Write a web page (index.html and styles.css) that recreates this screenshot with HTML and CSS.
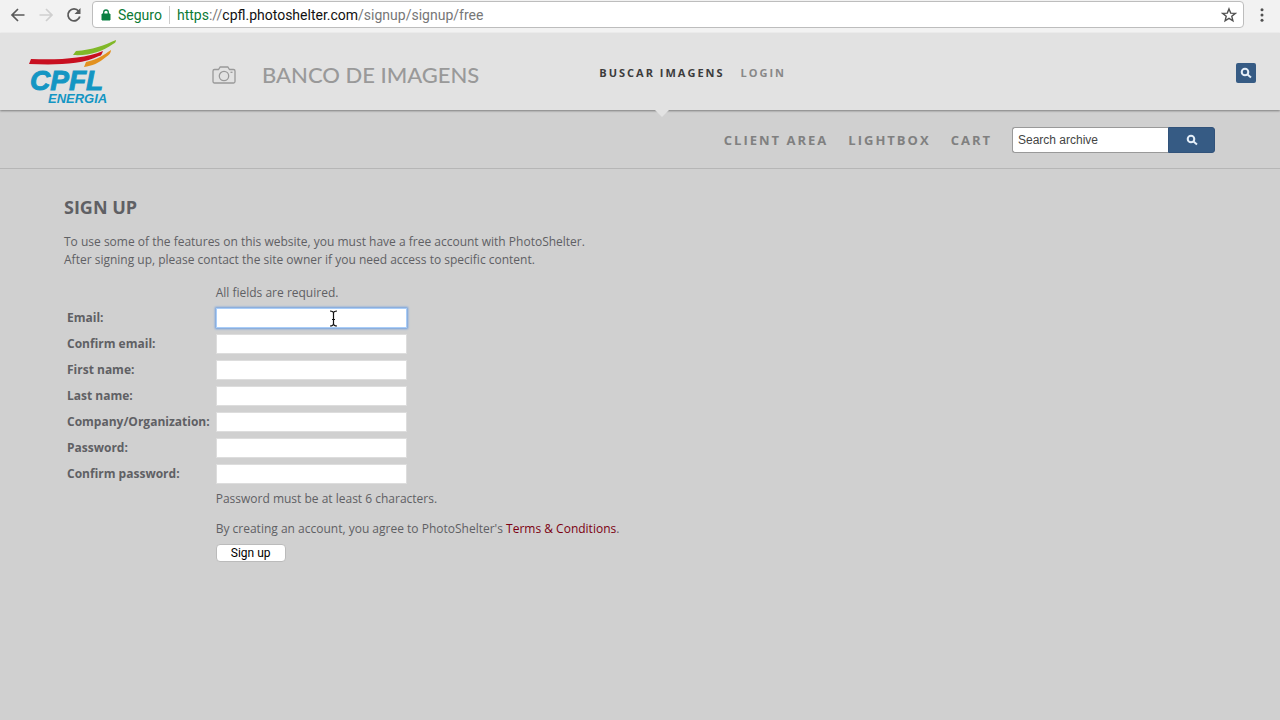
FILE: index.html
```html
<!DOCTYPE html>
<html lang="pt-BR">
<head>
    <meta charset="UTF-8">
    <meta name="viewport" content="width=device-width, initial-scale=1.0">
    <title>Sign Up - CPFL Energia</title>
    <link rel="stylesheet" href="styles.css">
</head>
<body>
    <div class="browser">
        <button class="browser-btn" type="button" aria-label="Back">
            <svg width="16" height="16" viewBox="0 0 16 16" fill="none" stroke="#5a5a5a" stroke-width="1.7"><path d="M14.5 8H2.5M8 2L2 8l6 6"/></svg>
        </button>
        <button class="browser-btn" type="button" aria-label="Forward">
            <svg width="16" height="16" viewBox="0 0 16 16" fill="none" stroke="#cfcfcf" stroke-width="1.7"><path d="M1.500 8H13.500M8 2l6 6-6 6"/></svg>
        </button>
        <button class="browser-btn" type="button" aria-label="Reload">
            <svg width="16" height="16" viewBox="0 0 16 16" fill="none" stroke="#5a5a5a" stroke-width="1.8"><path d="M12.700 4.200A6 6 0 1 0 13.800 9.500"/><path d="M14.500 1v6h-6z" fill="#5a5a5a" stroke="none"/></svg>
        </button>
        <div class="address">
            <svg class="lock" width="10" height="12" viewBox="0 0 10 12"><path d="M1 5h8v6H1z" fill="#0b8043" stroke="#0b8043" stroke-linejoin="round"/><path d="M2.700 5V3.300a2.300 2.300 0 0 1 4.600 0V5" fill="none" stroke="#0b8043" stroke-width="1.300"/></svg>
            <span class="secure">Seguro</span>
            <span class="url"><span class="scheme">https</span>://<span class="host">cpfl.photoshelter.com</span>/signup/signup/free</span>
            <button class="star" type="button" aria-label="Bookmark">
                <svg width="16" height="16" viewBox="0 0 16 16" fill="none" stroke="#505050" stroke-width="1.400"><path d="M8 1.900l1.700 4.200 4.600.3-3.500 2.900 1.100 4.500L8 11.400l-3.900 2.400 1.100-4.500L1.700 6.400l4.600-.3z"/></svg>
            </button>
        </div>
        <button class="browser-btn" type="button" aria-label="Menu">
            <svg width="16" height="16" viewBox="0 0 16 16" fill="#505050"><circle cx="8" cy="2.800" r="1.500"/><circle cx="8" cy="8" r="1.500"/><circle cx="8" cy="13.200" r="1.500"/></svg>
        </button>
    </div>

    <header class="header">
        <a class="logo" href="#" aria-label="CPFL Energia">
            <svg width="92" height="68" viewBox="0 0 92 68">
                <path d="M48 13C64 12 77 7 88 2C88 4 87 5 85 6C74 14 60 18 45 17z" fill="#80b828"/>
                <path d="M3 21C29 22 56 21 75 13C74 16 73 18 71 18C53 27 26 27 1 26z" fill="#c80f20"/>
                <path d="M58 24C68 22 76 17 83 12C83 15 81 17 78 19C71 25 64 28 56 29z" fill="#e2911f"/>
                <text class="logo-name" x="2" y="52">CPFL</text>
                <text class="logo-sub" x="20" y="65">ENERGIA</text>
            </svg>
        </a>
        <a class="brand" href="#">
            <svg width="24" height="18" viewBox="0 0 24 18" fill="none" stroke="#999" stroke-width="1.300"><path d="M2.500 3.500H6.500L8.200 1h7.600l1.700 2.500h4A1.500 1.500 0 0 1 23 5v10.500A1.500 1.500 0 0 1 21.500 17h-19A1.500 1.500 0 0 1 1 15.500V5A1.500 1.500 0 0 1 2.500 3.500z"/><circle cx="12" cy="10" r="4.700"/><path d="M18.500 6.300h2"/></svg>
            <span>BANCO DE IMAGENS</span>
        </a>
        <nav class="main-nav">
            <a class="active" href="#">BUSCAR IMAGENS</a>
            <a href="#">LOGIN</a>
        </nav>
        <button class="header-search" type="button" aria-label="Search">
            <svg width="12" height="12" viewBox="0 0 12 12" fill="none" stroke="#e4eef8" stroke-width="2"><circle cx="5" cy="5" r="3.300"/><path d="M7.500 7.500L11 10.500"/></svg>
        </button>
    </header>

    <div class="sub-nav">
        <a href="#">CLIENT AREA</a>
        <a href="#">LIGHTBOX</a>
        <a href="#">CART</a>
        <form class="archive-search">
            <input type="text" placeholder="Search archive" aria-label="Search archive">
            <button type="button" aria-label="Search archive">
                <svg width="12" height="12" viewBox="0 0 12 12" fill="none" stroke="#e4eef8" stroke-width="2"><circle cx="5" cy="5" r="3.300"/><path d="M7.500 7.500L11 10.500"/></svg>
            </button>
        </form>
    </div>

    <main class="content">
        <h1>SIGN UP</h1>
        <p>To use some of the features on this website, you must have a free account with PhotoShelter.<br>
        After signing up, please contact the site owner if you need access to specific content.</p>

        <form class="signup">
            <div class="note">All fields are required.</div>

            <label for="email">Email:</label>
            <div class="field">
                <input class="focused" type="email" id="email">
                <svg class="cursor" width="9" height="17" viewBox="0 0 9 17" fill="none" stroke="#111" stroke-width="1.200"><path d="M1 1q3.500 0 3.500 2.500v10q0 2.500-3.500 2.500M8 1q-3.500 0-3.500 2.500v10q0 2.500 3.500 2.500M3 9.500h3"/></svg>
            </div>

            <label for="email2">Confirm email:</label>
            <input type="email" id="email2">

            <label for="first">First name:</label>
            <input type="text" id="first">

            <label for="last">Last name:</label>
            <input type="text" id="last">

            <label for="company">Company/Organization:</label>
            <input type="text" id="company">

            <label for="password">Password:</label>
            <input type="password" id="password">

            <label for="password2">Confirm password:</label>
            <input type="password" id="password2">

            <div class="note">Password must be at least 6 characters.</div>
            <div class="note terms">By creating an account, you agree to PhotoShelter's <a href="#">Terms &amp; Conditions</a>.</div>
            <button class="submit" type="button">Sign up</button>
        </form>
    </main>
</body>
</html>
```
FILE: styles.css
```css
* {
    box-sizing: border-box;
}
body {
    font-family: "Open Sans", sans-serif;
    font-size: 12px;
    line-height: 18px;
    margin: 0;
    background: #d0d0d0;
    color: #5f6064;
}
a {
    color: inherit;
    text-decoration: none;
}
button {
    padding: 0;
    border: 0;
    background: none;
    cursor: pointer;
}
svg {
    display: block;
}

/* browser bar */
.browser {
    display: flex;
    align-items: center;
    gap: 12px;
    height: 33px;
    padding: 0 10px 4px;
    background: #f2f2f2;
}
.browser-btn {
    flex: none;
}
.address {
    flex: 1;
    display: flex;
    align-items: center;
    height: 27px;
    margin: 0 -2px;
    padding: 0 6px 0 8px;
    background: #fff;
    border: 1px solid #bdbdbd;
    border-radius: 4px;
    font-family: Roboto, sans-serif;
    font-size: 14px;
}
.secure {
    margin-left: 7px;
    padding-right: 7px;
    border-right: 1px solid #ccc;
    color: #0b7a35;
}
.url {
    flex: 1;
    margin-left: 7px;
    color: #777;
}
.scheme {
    color: #0b7a35;
}
.host {
    color: #111;
}

/* header */
.header {
    position: relative;
    display: flex;
    align-items: center;
    height: 77px;
    padding: 0 24px 0 28px;
    background: #e2e2e2;
    box-shadow: 0 1px 2px rgba(0, 0, 0, 0.4);
}
.logo-name {
    font: italic bold 28px "Liberation Sans", sans-serif;
    fill: #1496c3;
    stroke: #1496c3;
}
.logo-sub {
    font: italic bold 13px/1 "Liberation Sans", sans-serif;
    fill: #1496c3;
}
.brand {
    display: flex;
    align-items: center;
    gap: 26px;
    margin-left: 92px;
    padding-top: 7px;
    color: #999;
    font-family: Lato, sans-serif;
    font-size: 22px;
    font-weight: 500;
    line-height: 28px;
}
.main-nav {
    display: flex;
    gap: 16px;
    margin-left: 120px;
    padding-top: 2px;
    color: #888;
    font-size: 11px;
    font-weight: bold;
    letter-spacing: 2px;
}
.main-nav .active {
    color: #3c3c3c;
}
.main-nav .active::after {
    content: "";
    position: absolute;
    top: 100%;
    margin-left: -70px;
    border: 7px solid transparent;
    border-top-color: #e2e2e2;
    border-bottom: 0;
}
.header-search {
    display: flex;
    align-items: center;
    justify-content: center;
    width: 20px;
    height: 20px;
    margin-top: 2px;
    margin-left: auto;
    background: #365b84;
    border-radius: 2px;
}

/* sub navigation */
.sub-nav {
    display: flex;
    align-items: center;
    justify-content: flex-end;
    gap: 20px;
    height: 59px;
    padding: 2px 65px 0;
    border-bottom: 1px solid #b6b6b6;
    color: #808080;
    font-size: 13px;
    font-weight: bold;
    letter-spacing: 2px;
}
.archive-search {
    display: flex;
}
.archive-search input {
    width: 156px;
    height: 26px;
    padding: 0 5px;
    background: #fff;
    border: 1px solid #999;
    border-right: 0;
    border-radius: 3px 0 0 3px;
    font-family: "Liberation Sans", sans-serif;
    font-size: 12px;
}
.archive-search input::placeholder {
    color: #444;
}
.archive-search button {
    display: flex;
    align-items: center;
    justify-content: center;
    width: 47px;
    background: #365b84;
    border: 1px solid #31527a;
    border-radius: 0 3px 3px 0;
}

/* sign up form */
.content {
    padding: 25px 64px;
}
h1 {
    margin: 0 0 13px;
    font-size: 18px;
    line-height: 26px;
}
p {
    margin: 0 0 15px;
}
.signup {
    display: grid;
    grid-template-columns: max-content auto;
    justify-content: start;
    align-items: center;
    gap: 6px;
    padding-left: 3px;
}
.signup label {
    font-weight: bold;
}
.signup input {
    display: block;
    width: 191px;
    height: 20px;
    padding: 0 3px;
    background: #fff;
    border: 1px solid #ddd;
}
.signup input.focused,
.signup input:focus {
    border-color: #a9cdf8;
    outline: 0;
    box-shadow: 0 0 2px 1px #6f9fe0;
}
.field {
    position: relative;
}
.cursor {
    position: absolute;
    left: 113px;
    top: 2px;
}
.note {
    grid-column: 2;
}
.terms {
    margin-top: 6px;
}
.terms a {
    color: #7c0011;
}
.submit {
    grid-column: 2;
    width: 70px;
    height: 18px;
    background: #fff;
    border: 1px solid #bbb;
    border-radius: 4px;
    color: #000;
    font-family: Roboto, sans-serif;
    font-size: 12px;
}
```
